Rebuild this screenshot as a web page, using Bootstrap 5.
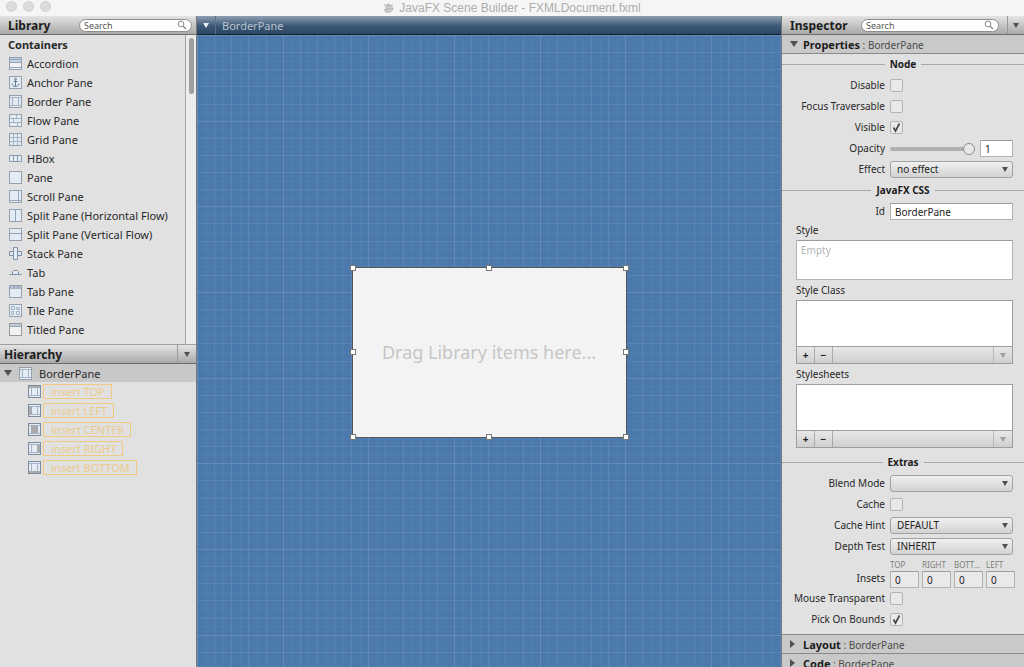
<!DOCTYPE html>
<html lang="en">
<head>
<meta charset="utf-8">
<meta name="viewport" content="width=device-width, initial-scale=1">
<title>JavaFX Scene Builder - FXMLDocument.fxml</title>
<link href="https://cdn.jsdelivr.net/npm/bootstrap@5.3.0/dist/css/bootstrap.min.css" rel="stylesheet">
<style>
  :root { --ink: #282828; --arrow: #505050; }
  body { font-family: "Noto Sans", "Open Sans", sans-serif; font-size: 11px; line-height: 19px; color: var(--ink); background: #e1e1e1; }
  button, input, select, textarea { font-family: inherit; }
  .title-bar { height: 16px; background: #f5f5f5; color: #adadad; font: 12px/15px "Liberation Sans", sans-serif; }
  .traffic { left: 6px; top: 1px; gap: 6px; }
  .traffic span { width: 11px; height: 11px; border-radius: 50%; background: #dcdcdc; border: 1px solid #d0d0d0; }
  .side-left { width: 197px; border-right: 1px solid #777; }
  .side-right { width: 243px; border-left: 1px solid #777; }
  .panel-head { height: 19px; background: linear-gradient(#e4e4e4, #a9a9a9); border-bottom: 1px solid #6b6b6b; }
  .panel-head h2, .group-title, .acc-head strong { font-size: 11px; font-weight: 700; line-height: 19px; margin: 0; color: #1c1c1c; }
  .panel-head h2 { font-size: 12px; }
  .search-box { height: 13px; border: 1px solid #8d8d8d; border-radius: 7px; background: #fff; }
  .search-lib { width: 113px; }
  .search-insp { width: 138px; }
  .search-box input { border: 0; background: none; outline: 0; font-size: 9px; line-height: 11px; min-width: 0; padding: 0 0 0 4px; }
  .search-box input::placeholder { color: #555; opacity: 1; }
  .lens { width: 10px; height: 10px; flex: none; }
  .menu-btn { border: 0; background: none; padding: 0; width: 19px; border-left: 1px solid #999; }
  .menu-btn.narrow { width: 17px; }
  .tri { width: 0; height: 0; border: 3px solid transparent; border-top: 5px solid var(--arrow); border-bottom: 0; }
  .tri-big { border-width: 6px 4px 0; }
  .tri-right { border: 4px solid transparent; border-left: 5px solid var(--arrow); border-right: 0; }
  .lib-section { flex: 328 1 0; }
  .hier-section { flex: 323 1 0; }
  .lib-row { height: 19px; padding-left: 9px; gap: 5px; }
  .ico { width: 13px; height: 13px; flex: none; }
  .scroll-track { width: 11px; background: #ececec; border-left: 1px solid #a5a5a5; }
  .scroll-thumb { width: 5px; height: 56px; margin: 3px auto 0; border-radius: 3px; background: #9f9f9f; }
  .hier-head { height: 20px; border-top: 1px solid #a0a0a0; }
  .tree-root { height: 18px; background: #c8c8c8; padding-left: 4px; gap: 7px; }
  .tree-slot { height: 19px; padding-left: 28px; gap: 2px; }
  .slot-tag { border: 1px solid #f0ca80; color: #eccb8c; height: 15px; line-height: 13px; padding: 0 6px 0 7px; }
  .crumbs { height: 19px; background: linear-gradient(#8f9fb1, #3c5876 55%, #2c4764); border-bottom: 1px solid #14202e; color: #b9c3ce; }
  .crumbs button { width: 19px; padding: 0; border: 0; background: none; border-right: 1px solid #54708c; }
  .crumbs a { padding-left: 6px; color: inherit; line-height: 20px; }
  .crumbs .tri { border-top-color: #e8edf2; }
  .canvas-area { background: #4b79ac; padding-top: 2px; }
  .root-pane { width: 275px; height: 171px; background: #f3f3f3; border: 1px solid #555; color: #c6c6c6; font-size: 18px; }
  .grip { width: 6px; height: 6px; background: #fff; border: 1px solid #777; }
  .acc-head { height: 19px; background: #c9c9c9; border-bottom: 1px solid #8a8a8a; padding-left: 8px; gap: 6px; color: #4a4a4a; font-size: 10px; line-height: 18px; }
  .acc-head.later { border-top: 1px solid #8a8a8a; border-bottom: 0; }
  .acc-arrow { width: 7px; }
  .group-title { font-size: 10px; height: 21px; line-height: 21px; gap: 5px; }
  .group-title::before, .group-title::after { content: ""; flex: 1; height: 1px; background: #a9a9a9; }
  .prop-form { font-size: 10px; }
  .prop { height: 21px; padding-right: 11px; gap: 5px; }
  .prop > label, .prop > .prop-label { width: 103px; text-align: right; flex: none; white-space: nowrap; }
  .prop .form-check-input { width: 13px; height: 13px; margin: 0; border: 1px solid #b4b4b4; border-radius: 2px; background-color: #e9e9e9; }
  .prop .form-check-input:checked { background-size: 11px; background-image: url("data:image/svg+xml,%3Csvg xmlns='http://www.w3.org/2000/svg' viewBox='0 0 11 11'%3E%3Cpath d='M2.500 5.500l2 3.500L8.500 1.500' fill='none' stroke='%23444' stroke-width='1.600'/%3E%3C/svg%3E"); }
  .field { height: 17px; border: 1px solid #b2b2b2; border-top-color: #9c9c9c; border-radius: 1px; background: #fff; font-size: 10px; line-height: 15px; padding: 0 4px; min-width: 0; color: #222; }
  textarea.field { height: 40px; resize: none; padding: 2px 4px; display: block; }
  textarea.field::placeholder { color: #b4b4b4; opacity: 1; }
  .picker { appearance: none; height: 17px; border: 1px solid #a2a2a2; border-radius: 3px; font-size: 10px; line-height: 15px; padding: 0 6px; color: #222;
    background: url("data:image/svg+xml,%3Csvg xmlns='http://www.w3.org/2000/svg' viewBox='0 0 6 5'%3E%3Cpath d='M0 0h6L3 5z' fill='%23505050'/%3E%3C/svg%3E") no-repeat right 4px center / 6px 5px, linear-gradient(#f0f0f0, #d2d2d2); }
  .fader { appearance: none; width: 85px; height: 13px; background: none; margin: 0; }
  .fader::-webkit-slider-runnable-track { height: 4px; border-radius: 2px; background: #b0b0b0; }
  .fader::-webkit-slider-thumb { appearance: none; width: 12px; height: 12px; margin-top: -4px; border-radius: 50%; background: #e8e8e8; border: 1px solid #8d8d8d; }
  .block-prop { padding: 0 11px 0 14px; }
  .block-prop + .block-prop { padding-top: 2px; }
  .block-prop > label, .block-prop > .block-label { height: 18px; line-height: 16px; display: block; }
  .list-box { border: 1px solid #9d9d9d; background: #fff; height: 64px; }
  .list-tools { height: 17px; background: linear-gradient(#e8e8e8, #cfcfcf); border-top: 1px solid #9d9d9d; }
  .list-tools button { width: 18px; border: 0; border-right: 1px solid #ababab; background: none; padding: 0; font-weight: 700; font-size: 10px; line-height: 15px; color: #222; }
  .list-tools button:last-child { border-right: 0; border-left: 1px solid #b8b8b8; width: 19px; }
  .list-tools .tri { border-top-color: #a0a0a0; }
  .insets { height: 31px; }
  .inset-cells { gap: 3px; }
  .inset-cell { width: 29px; }
  .inset-cell label { font-size: 8px; line-height: 13px; height: 13px; color: #7d7d7d; white-space: nowrap; }
  .inset-cell .field { background: #e9e9e9; }
</style>
</head>
<body class="vh-100 d-flex flex-column overflow-hidden">

<svg class="d-none" aria-hidden="true">
  <defs>
    <symbol id="i-box" viewBox="0 0 13 13"><rect x=".5" y=".5" width="12" height="12" fill="#e3ebf5" stroke="#96a1ad"/></symbol>
    <symbol id="i-accordion" viewBox="0 0 13 13"><rect x=".5" y=".5" width="12" height="12" fill="#eef2f7" stroke="#929eab"/><path d="M1 1h11v4H1z" fill="#c3d2e2"/><path d="M1 2.500h11M1 5.500h11M1 10.500h11" stroke="#93a4b6"/></symbol>
    <symbol id="i-anchor" viewBox="0 0 13 13"><use href="#i-box"/><path d="M6.500 3.500v7M4.500 5.500h4M3 7.500c.3 4 6.700 4 7 0" fill="none" stroke="#6b7c90"/><circle cx="6.500" cy="3" r="1" fill="none" stroke="#6b7c90" stroke-width=".8"/></symbol>
    <symbol id="i-border" viewBox="0 0 13 13"><use href="#i-box"/><path d="M1 2.500h11M1 10.500h11M3.500 2.500v8M9.500 2.500v8" stroke="#a5b4c5"/></symbol>
    <symbol id="i-flow" viewBox="0 0 13 13"><use href="#i-box"/><path d="M1 4.500h11M1 8.500h11M7.500 1v3.500M4.500 4.500v4M8.500 8.500V12" stroke="#a5b4c5"/></symbol>
    <symbol id="i-grid" viewBox="0 0 13 13"><use href="#i-box"/><path d="M1 4.500h11M1 8.500h11M4.500 1v11M8.500 1v11" stroke="#a5b4c5"/></symbol>
    <symbol id="i-hbox" viewBox="0 0 13 13"><path d="M.5 3.500h12v6H.5zM4.500 3.500v6M8.500 3.500v6" fill="#e3ebf5" stroke="#8b9bad"/></symbol>
    <symbol id="i-scroll" viewBox="0 0 13 13"><use href="#i-box"/><path d="M9.500 1v11M1 10.500h11" stroke="#9aabbf"/></symbol>
    <symbol id="i-splith" viewBox="0 0 13 13"><use href="#i-box"/><path d="M6 1h1v11H6z" fill="#8fa2b8"/></symbol>
    <symbol id="i-splitv" viewBox="0 0 13 13"><use href="#i-box"/><path d="M1 5.500h11" stroke="#8fa2b8"/></symbol>
    <symbol id="i-stack" viewBox="0 0 13 13"><path d="M.5 4.500h12v4H.5z" fill="#dbe6f2" stroke="#8192a5"/><path d="M4.500.5h4v12h-4z" fill="#e3ebf5" stroke="#8192a5"/></symbol>
    <symbol id="i-tab" viewBox="0 0 13 13"><path d="M.5 8.500h12M3.500 8.500v-3l1-1h4l1 1v3" fill="#dfe9f4" stroke="#8192a5"/></symbol>
    <symbol id="i-tabpane" viewBox="0 0 13 13"><use href="#i-box"/><path d="M1 1h11v2H1z" fill="#b4c3d5"/><path d="M5 0v3M9 0v3" stroke="#8797a9"/><path d="M1 3.500h11" stroke="#a5b4c5"/></symbol>
    <symbol id="i-tile" viewBox="0 0 13 13"><use href="#i-box"/><path d="M2.500 2.500h3v3h-3zM7.500 3.500h3v2h-3zM2.500 7.500h2v3h-2zM7.500 7.500h3v3h-3z" fill="none" stroke="#a5b4c5"/></symbol>
    <symbol id="i-titled" viewBox="0 0 13 13"><rect x=".5" y=".5" width="12" height="12" fill="#f1f1f1" stroke="#9a9a9a"/><path d="M1 1h11v2H1z" fill="#bccbdd"/><path d="M1 3.500h11" stroke="#9aa7b5"/></symbol>
    <symbol id="i-slot" viewBox="0 0 13 13"><use href="#i-border"/><path d="M.5 0v13M12.500 0v13M0 .5h13M0 12.500h13" stroke="#7d8b9b"/></symbol>
    <symbol id="i-lens" viewBox="0 0 10 10"><circle cx="4" cy="4" r="2.900" fill="none" stroke="#888"/><path d="M6.200 6.200L9 9" stroke="#888" stroke-width="1.300"/></symbol>
  </defs>
</svg>

<header class="title-bar position-relative d-flex justify-content-center align-items-center flex-shrink-0">
  <div class="traffic position-absolute d-flex"><span></span><span></span><span></span></div>
  <svg class="me-1" width="12" height="12" viewBox="0 0 12 12" aria-hidden="true"><path d="M1 2l3 1 1-2 2 2 3-1-1 3 2 1-2 3-3 2-4-1-1-3 2 0z" fill="#b5b5b5"/><path d="M2 4l4 2 4-2M3 8l3 1 3-2" fill="none" stroke="#e6e6e6"/></svg>
  <span>JavaFX Scene Builder - FXMLDocument.fxml</span>
</header>

<div class="d-flex flex-grow-1 overflow-hidden">
  <aside class="side-left d-flex flex-column flex-shrink-0">
    <section class="lib-section d-flex flex-column overflow-hidden">
      <div class="panel-head d-flex align-items-center flex-shrink-0 ps-2">
        <h2>Library</h2>
        <div class="search-box search-lib d-flex align-items-center ms-auto me-1">
          <input class="flex-grow-1" type="text" placeholder="Search" aria-label="Search library">
          <svg class="lens me-1" aria-hidden="true"><use href="#i-lens"/></svg>
        </div>
      </div>
      <div class="d-flex flex-grow-1 overflow-hidden">
        <div class="flex-grow-1 overflow-hidden">
          <div class="fw-bold ps-2">Containers</div>
          <ul class="list-unstyled m-0">
            <li class="lib-row d-flex align-items-center"><svg class="ico"><use href="#i-accordion"/></svg>Accordion</li>
            <li class="lib-row d-flex align-items-center"><svg class="ico"><use href="#i-anchor"/></svg>Anchor Pane</li>
            <li class="lib-row d-flex align-items-center"><svg class="ico"><use href="#i-border"/></svg>Border Pane</li>
            <li class="lib-row d-flex align-items-center"><svg class="ico"><use href="#i-flow"/></svg>Flow Pane</li>
            <li class="lib-row d-flex align-items-center"><svg class="ico"><use href="#i-grid"/></svg>Grid Pane</li>
            <li class="lib-row d-flex align-items-center"><svg class="ico"><use href="#i-hbox"/></svg>HBox</li>
            <li class="lib-row d-flex align-items-center"><svg class="ico"><use href="#i-box"/></svg>Pane</li>
            <li class="lib-row d-flex align-items-center"><svg class="ico"><use href="#i-scroll"/></svg>Scroll Pane</li>
            <li class="lib-row d-flex align-items-center"><svg class="ico"><use href="#i-splith"/></svg>Split Pane (Horizontal Flow)</li>
            <li class="lib-row d-flex align-items-center"><svg class="ico"><use href="#i-splitv"/></svg>Split Pane (Vertical Flow)</li>
            <li class="lib-row d-flex align-items-center"><svg class="ico"><use href="#i-stack"/></svg>Stack Pane</li>
            <li class="lib-row d-flex align-items-center"><svg class="ico"><use href="#i-tab"/></svg>Tab</li>
            <li class="lib-row d-flex align-items-center"><svg class="ico"><use href="#i-tabpane"/></svg>Tab Pane</li>
            <li class="lib-row d-flex align-items-center"><svg class="ico"><use href="#i-tile"/></svg>Tile Pane</li>
            <li class="lib-row d-flex align-items-center"><svg class="ico"><use href="#i-titled"/></svg>Titled Pane</li>
            <li class="lib-row d-flex align-items-center"><svg class="ico"></svg>Tool Bar</li>
          </ul>
        </div>
        <div class="scroll-track"><div class="scroll-thumb"></div></div>
      </div>
    </section>

    <section class="hier-section d-flex flex-column overflow-hidden">
      <div class="panel-head hier-head d-flex flex-shrink-0 ps-1">
        <h2>Hierarchy</h2>
        <button class="menu-btn d-flex align-items-center justify-content-center ms-auto" type="button" aria-label="Hierarchy menu"><span class="tri"></span></button>
      </div>
      <div class="tree-root d-flex align-items-center"><span class="tri tri-big"></span><svg class="ico"><use href="#i-border"/></svg>BorderPane</div>
      <ul class="list-unstyled m-0">
        <li class="tree-slot d-flex align-items-center"><svg class="ico" viewBox="0 0 13 13"><use href="#i-slot"/><path d="M1 1h11v2H1z" fill="#aaa"/></svg><span class="slot-tag">insert TOP</span></li>
        <li class="tree-slot d-flex align-items-center"><svg class="ico" viewBox="0 0 13 13"><use href="#i-slot"/><path d="M1 3h3v7H1z" fill="#aaa"/></svg><span class="slot-tag">insert LEFT</span></li>
        <li class="tree-slot d-flex align-items-center"><svg class="ico" viewBox="0 0 13 13"><use href="#i-slot"/><path d="M3 3h7v7H3z" fill="#aaa"/></svg><span class="slot-tag">insert CENTER</span></li>
        <li class="tree-slot d-flex align-items-center"><svg class="ico" viewBox="0 0 13 13"><use href="#i-slot"/><path d="M9 3h3v7H9z" fill="#aaa"/></svg><span class="slot-tag">insert RIGHT</span></li>
        <li class="tree-slot d-flex align-items-center"><svg class="ico" viewBox="0 0 13 13"><use href="#i-slot"/><path d="M1 10h11v2H1z" fill="#aaa"/></svg><span class="slot-tag">insert BOTTOM</span></li>
      </ul>
    </section>
  </aside>

  <main class="d-flex flex-column flex-grow-1 overflow-hidden">
    <nav class="crumbs d-flex flex-shrink-0" aria-label="Selection path">
      <button class="d-flex align-items-center justify-content-center" type="button" aria-label="Path menu"><span class="tri"></span></button>
      <a class="text-decoration-none" href="#">BorderPane</a>
    </nav>
    <div class="canvas-area position-relative flex-grow-1 d-flex align-items-center justify-content-center overflow-hidden">
      <svg class="position-absolute top-0 start-0 w-100 h-100" aria-hidden="true">
        <defs>
          <pattern id="blueprint" width="257" height="257" patternUnits="userSpaceOnUse">
            <g id="rules" shape-rendering="crispEdges">
              <path d="M9 0v257M26 0v257M43 0v257M60 0v257M77 0v257M94 0v257M111 0v257M129 0v257M146 0v257M163 0v257M180 0v257M197 0v257M214 0v257M231 0v257M248 0v257" stroke="#fff" stroke-opacity=".04"/>
              <path d="M17 0v257M34 0v257M51 0v257M69 0v257M103 0v257M120 0v257M137 0v257M154 0v257M188 0v257M206 0v257M223 0v257M240 0v257" stroke="#fff" stroke-opacity=".08"/>
              <path d="M.5 0v257M86 0v257M171 0v257" stroke="#fff" stroke-opacity=".13"/>
            </g>
            <use href="#rules" transform="matrix(0 1 1 0 0 0)"/>
          </pattern>
        </defs>
        <rect width="100%" height="100%" fill="url(#blueprint)"/>
      </svg>
      <div class="root-pane position-relative d-flex align-items-center justify-content-center">
        Drag Library items here...
        <span class="grip position-absolute top-0 start-0 translate-middle"></span>
        <span class="grip position-absolute top-0 start-50 translate-middle"></span>
        <span class="grip position-absolute top-0 start-100 translate-middle"></span>
        <span class="grip position-absolute top-50 start-0 translate-middle"></span>
        <span class="grip position-absolute top-50 start-100 translate-middle"></span>
        <span class="grip position-absolute top-100 start-0 translate-middle"></span>
        <span class="grip position-absolute top-100 start-50 translate-middle"></span>
        <span class="grip position-absolute top-100 start-100 translate-middle"></span>
      </div>
    </div>
  </main>

  <aside class="side-right flex-shrink-0 overflow-hidden">
    <div class="panel-head d-flex align-items-center ps-2">
      <h2>Inspector</h2>
      <div class="search-box search-insp d-flex align-items-center ms-auto me-2">
        <input class="flex-grow-1" type="text" placeholder="Search" aria-label="Search inspector">
        <svg class="lens me-1" aria-hidden="true"><use href="#i-lens"/></svg>
      </div>
      <button class="menu-btn narrow align-self-stretch d-flex align-items-center justify-content-center" type="button" aria-label="Inspector menu"><span class="tri"></span></button>
    </div>
    <div class="acc-head d-flex"><span class="acc-arrow d-flex align-items-center"><span class="tri tri-big"></span></span><span><strong>Properties</strong> : BorderPane</span></div>

    <form class="prop-form">
      <h3 class="group-title d-flex align-items-center">Node</h3>
      <div class="prop d-flex align-items-center"><label for="p-dis">Disable</label><input id="p-dis" class="form-check-input" type="checkbox"></div>
      <div class="prop d-flex align-items-center"><label for="p-foc">Focus Traversable</label><input id="p-foc" class="form-check-input" type="checkbox"></div>
      <div class="prop d-flex align-items-center"><label for="p-vis">Visible</label><input id="p-vis" class="form-check-input" type="checkbox" checked></div>
      <div class="prop d-flex align-items-center"><label for="p-op">Opacity</label><input id="p-op" class="fader" type="range" value="100"><input class="field flex-grow-1 w-25" type="text" value="1" aria-label="Opacity value"></div>
      <div class="prop d-flex align-items-center"><label for="p-eff">Effect</label><select id="p-eff" class="picker flex-grow-1"><option>no effect</option></select></div>

      <h3 class="group-title d-flex align-items-center">JavaFX CSS</h3>
      <div class="prop d-flex align-items-center"><label for="p-id">Id</label><input id="p-id" class="field flex-grow-1" type="text" value="BorderPane"></div>
      <div class="block-prop"><label for="p-style">Style</label><textarea id="p-style" class="field w-100" placeholder="Empty"></textarea></div>
      <div class="block-prop"><span class="block-label">Style Class</span>
        <div class="list-box d-flex flex-column justify-content-end"><div class="list-tools d-flex"><button type="button">+</button><button type="button">−</button><button class="ms-auto d-flex align-items-center justify-content-center" type="button" aria-label="Style class menu"><span class="tri"></span></button></div></div>
      </div>
      <div class="block-prop"><span class="block-label">Stylesheets</span>
        <div class="list-box d-flex flex-column justify-content-end"><div class="list-tools d-flex"><button type="button">+</button><button type="button">−</button><button class="ms-auto d-flex align-items-center justify-content-center" type="button" aria-label="Stylesheets menu"><span class="tri"></span></button></div></div>
      </div>

      <h3 class="group-title d-flex align-items-center mt-1">Extras</h3>
      <div class="prop d-flex align-items-center"><label for="p-bl">Blend Mode</label><select id="p-bl" class="picker flex-grow-1"><option></option></select></div>
      <div class="prop d-flex align-items-center"><label for="p-ca">Cache</label><input id="p-ca" class="form-check-input" type="checkbox"></div>
      <div class="prop d-flex align-items-center"><label for="p-ch">Cache Hint</label><select id="p-ch" class="picker flex-grow-1"><option>DEFAULT</option></select></div>
      <div class="prop d-flex align-items-center"><label for="p-dt">Depth Test</label><select id="p-dt" class="picker flex-grow-1"><option>INHERIT</option></select></div>
      <div class="prop insets d-flex align-items-end"><span class="prop-label">Insets</span>
        <div class="inset-cells d-flex flex-shrink-0">
          <div class="inset-cell d-flex flex-column"><label for="in-t">TOP</label><input id="in-t" class="field" type="text" value="0"></div>
          <div class="inset-cell d-flex flex-column"><label for="in-r">RIGHT</label><input id="in-r" class="field" type="text" value="0"></div>
          <div class="inset-cell d-flex flex-column"><label for="in-b">BOTT...</label><input id="in-b" class="field" type="text" value="0"></div>
          <div class="inset-cell d-flex flex-column"><label for="in-l">LEFT</label><input id="in-l" class="field" type="text" value="0"></div>
        </div>
      </div>
      <div class="prop d-flex align-items-center"><label for="p-mt">Mouse Transparent</label><input id="p-mt" class="form-check-input" type="checkbox"></div>
      <div class="prop d-flex align-items-center"><label for="p-pb">Pick On Bounds</label><input id="p-pb" class="form-check-input" type="checkbox" checked></div>
    </form>
    <div class="acc-head later d-flex mt-1"><span class="acc-arrow d-flex align-items-center"><span class="tri-right"></span></span><span><strong>Layout</strong> : BorderPane</span></div>
    <div class="acc-head later d-flex"><span class="acc-arrow d-flex align-items-center"><span class="tri-right"></span></span><span><strong>Code</strong> : BorderPane</span></div>
  </aside>
</div>
<script src="https://cdn.jsdelivr.net/npm/bootstrap@5.3.0/dist/js/bootstrap.bundle.min.js"></script>
</body>
</html>
